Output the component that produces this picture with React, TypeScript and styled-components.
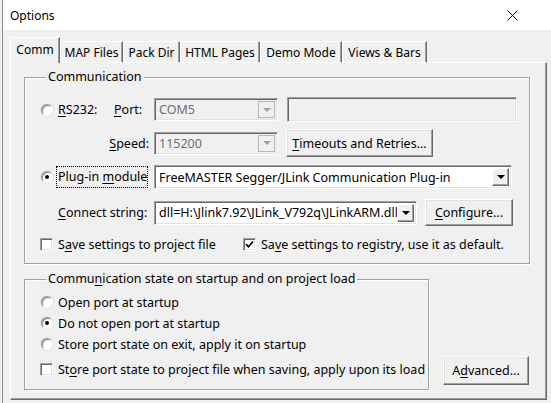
import React from 'react';
import styled, { createGlobalStyle } from 'styled-components';

const GlobalStyle = createGlobalStyle`
  html, body {
    margin: 0;
    padding: 0;
    background: #f0f0f0;
  }
  body {
    font-family: 'Noto Sans', 'Liberation Sans', sans-serif;
    font-size: 12.5px;
    color: #000;
  }
  * {
    box-sizing: border-box;
  }
`;

const Window = styled.div`
  width: 551px;
  height: 403px;
  padding-left: 2px;
  background: #f0f0f0;
  overflow: hidden;
`;

const Frame = styled.div`
  height: 100%;
  display: flex;
  flex-direction: column;
  border-left: 1px solid #8a8a8a;
`;

const TitleBar = styled.div`
  flex: none;
  height: 30px;
  display: flex;
  align-items: center;
  justify-content: space-between;
  padding: 0 33px 0 7px;
  background: #fff;
  font-size: 12px;
`;

const Body = styled.div`
  flex: 1;
  display: flex;
  flex-direction: column;
  padding: 7px 4px 4px 7px;
`;

const TabStrip = styled.div`
  display: flex;
  align-items: flex-end;
  height: 26px;
  position: relative;
  z-index: 1;
  margin-bottom: -1px;
  font-size: 12px;
`;

const Tab = styled.div<{ $w: number; $active?: boolean }>`
  width: ${p => p.$w}px;
  height: ${p => (p.$active ? 26 : 22)}px;
  display: flex;
  align-items: center;
  justify-content: center;
  padding-bottom: ${p => (p.$active ? 3 : 0)}px;
  background: #f0f0f0;
  border: 1px solid;
  border-color: #fff #696969 ${p => (p.$active ? '#f0f0f0' : '#fff')} #fff;
  border-bottom-width: ${p => (p.$active ? 0 : 1)}px;
  box-shadow: inset -1px 0 0 #a0a0a0;
  white-space: nowrap;
`;

const Panel = styled.div`
  flex: 1;
  display: flex;
  flex-direction: column;
  padding: 6px 14px 9px 13px;
  border: 1px solid;
  border-color: #fff #696969 #696969 #fff;
  box-shadow: inset -1px -1px 0 #a0a0a0;
`;

const Group = styled.fieldset<{ $w: number }>`
  width: ${p => p.$w}px;
  margin: 0;
  padding: 12px 10px 10px 15px;
  min-width: 0;
  border: 1px solid #a0a0a0;
  box-shadow: 1px 1px 0 #fff, inset 1px 1px 0 #fff;
`;

const StartupGroup = styled(Group)`
  padding: 6px 10px 11px 15px;
`;

const Legend = styled.legend`
  margin-left: 6px;
  padding: 0 2px;
  line-height: 16px;
  background: #f0f0f0;
`;

const Row = styled.div<{ $top?: number }>`
  display: flex;
  align-items: center;
  margin-top: ${p => p.$top ?? 0}px;
`;

const Cell = styled.div<{ $w: number; $right?: boolean }>`
  flex: none;
  width: ${p => p.$w}px;
  display: flex;
  align-items: center;
  justify-content: ${p => (p.$right ? 'flex-end' : 'flex-start')};
  padding-right: ${p => (p.$right ? 5 : 0)}px;
  white-space: nowrap;
`;

const Indent = styled.span`
  padding-left: 18px;
  white-space: nowrap;
`;

const RadioCircle = styled.span<{ $on?: boolean }>`
  flex: none;
  width: 12px;
  height: 12px;
  margin: 0 5px 0 1px;
  border-radius: 50%;
  border: 1px solid;
  border-color: #a0a0a0 #fff #fff #a0a0a0;
  box-shadow: inset 1px 1px 0 #8a8a8a, 0 0 0 0.5px #d0d0d0;
  background: #fff;
  display: flex;
  align-items: center;
  justify-content: center;

  &::after {
    content: '';
    width: 4px;
    height: 4px;
    border-radius: 50%;
    background: #000;
    display: ${p => (p.$on ? 'block' : 'none')};
  }
`;

const CheckBox = styled.span`
  flex: none;
  width: 13px;
  height: 13px;
  margin-right: 5px;
  border: 1px solid;
  border-color: #a0a0a0 #fff #fff #a0a0a0;
  box-shadow: inset 1px 1px 0 #696969, inset -1px -1px 0 #e3e3e3;
  background: #fff;
  display: flex;
  align-items: center;
  justify-content: center;
`;

const Focus = styled.span`
  outline: 1px dotted #000;
  outline-offset: 0;
  padding: 1px 0 2px 1px;
  margin-left: -1px;
  line-height: 17px;
`;

const Sunken = styled.div<{ $w: number; $h: number; $off?: boolean; $left?: number }>`
  flex: none;
  width: ${p => p.$w}px;
  height: ${p => p.$h}px;
  margin-left: ${p => p.$left ?? 0}px;
  display: flex;
  align-items: center;
  padding: 2px 2px 2px 4px;
  border: 1px solid;
  border-color: #a0a0a0 #fff #fff #a0a0a0;
  box-shadow: inset 1px 1px 0 #696969, inset -1px -1px 0 #e3e3e3;
  background: ${p => (p.$off ? '#f0f0f0' : '#fff')};
  color: ${p => (p.$off ? '#6d6d6d' : '#000')};
  overflow: hidden;
`;

const ComboText = styled.span`
  flex: 1;
  min-width: 0;
  white-space: nowrap;
  overflow: hidden;
`;

const DropButton = styled.span<{ $off?: boolean }>`
  flex: none;
  width: 17px;
  height: 100%;
  display: flex;
  align-items: center;
  justify-content: center;
  background: #f0f0f0;
  border: 1px solid;
  border-color: ${p => (p.$off ? '#b8b8b8' : '#fff #696969 #696969 #fff')};
  box-shadow: ${p => (p.$off ? 'none' : 'inset -1px -1px 0 #a0a0a0')};

  &::after {
    content: '';
    border-left: 4px solid transparent;
    border-right: 4px solid transparent;
    border-top: 4px solid ${p => (p.$off ? '#a0a0a0' : '#000')};
  }
`;

const Button = styled.div<{ $w: number; $h: number; $left?: number }>`
  flex: none;
  width: ${p => p.$w}px;
  height: ${p => p.$h}px;
  margin-left: ${p => p.$left ?? 0}px;
  display: flex;
  align-items: center;
  justify-content: center;
  border: 1px solid;
  border-color: #fff #696969 #696969 #fff;
  box-shadow: inset -1px -1px 0 #a0a0a0, inset 1px 1px 0 #e3e3e3;
  background: #f0f0f0;
  white-space: nowrap;
`;

const BottomArea = styled.div`
  display: flex;
  align-items: flex-end;
  margin-top: 7px;
`;

const AdvancedButton = styled(Button)`
  margin-bottom: 5px;
`;

const Option = styled.div<{ $top?: number }>`
  display: flex;
  align-items: center;
  height: 18px;
  margin-top: ${p => p.$top ?? 0}px;
  white-space: nowrap;
`;

const Key = styled.u`
  text-decoration-thickness: 1px;
  text-underline-offset: 2px;
`;

const CloseIcon = () => (
  <svg width="11" height="11" viewBox="0 0 11 11">
    <path d="M0.5 0.5 L10.5 10.5 M10.5 0.5 L0.5 10.5" stroke="#000" strokeWidth="1" />
  </svg>
);

const CheckMark = () => (
  <svg width="9" height="9" viewBox="0 0 9 9">
    <path d="M1 4.2 L3.4 6.8 L8 1.5" stroke="#000" strokeWidth="1.7" fill="none" />
  </svg>
);

const tabs = [
  { label: 'Comm', w: 50 },
  { label: 'MAP Files', w: 63 },
  { label: 'Pack Dir', w: 57 },
  { label: 'HTML Pages', w: 80 },
  { label: 'Demo Mode', w: 82 },
  { label: 'Views & Bars', w: 85 },
];

export default function App() {
  return (
    <>
      <GlobalStyle />
      <Window>
        <Frame>
          <TitleBar>
            <span>Options</span>
            <CloseIcon />
          </TitleBar>
          <Body>
            <TabStrip>
              {tabs.map((t, i) => (
                <Tab key={t.label} $w={t.w} $active={i === 0}>
                  {t.label}
                </Tab>
              ))}
            </TabStrip>
            <Panel>
              <Group $w={506}>
                <Legend>Communication</Legend>
                <Row>
                  <Cell $w={74}>
                    <RadioCircle />
                    <span>
                      <Key>R</Key>S232:
                    </span>
                  </Cell>
                  <Cell $w={40}>
                    <span>
                      <Key>P</Key>ort:
                    </span>
                  </Cell>
                  <Sunken $w={124} $h={23} $off>
                    <ComboText>COM5</ComboText>
                    <DropButton $off />
                  </Sunken>
                  <Sunken $w={230} $h={25} $off $left={9} />
                </Row>
                <Row $top={7}>
                  <Cell $w={114} $right>
                    <span>
                      <Key>S</Key>peed:
                    </span>
                  </Cell>
                  <Sunken $w={124} $h={23} $off>
                    <ComboText>115200</ComboText>
                    <DropButton $off />
                  </Sunken>
                  <Button $w={147} $h={28} $left={8}>
                    <span>
                      <Key>T</Key>imeouts and Retries...
                    </span>
                  </Button>
                </Row>
                <Row $top={8}>
                  <Cell $w={114}>
                    <RadioCircle $on />
                    <Focus>
                      Plug-in <Key>m</Key>odule
                    </Focus>
                  </Cell>
                  <Sunken $w={358} $h={24}>
                    <ComboText>FreeMASTER Segger/JLink Communication Plug-in</ComboText>
                    <DropButton />
                  </Sunken>
                </Row>
                <Row $top={10}>
                  <Cell $w={114}>
                    <Indent>
                      <Key>C</Key>onnect string:
                    </Indent>
                  </Cell>
                  <Sunken $w={263} $h={24}>
                    <ComboText>dll=H:\Jlink7.92\JLink_V792q\JLinkARM.dll</ComboText>
                    <DropButton />
                  </Sunken>
                  <Button $w={88} $h={27} $left={8}>
                    <span>
                      <Key>C</Key>onfigure...
                    </span>
                  </Button>
                </Row>
                <Row $top={10}>
                  <Cell $w={203}>
                    <CheckBox />
                    <span>
                      S<Key>a</Key>ve settings to project file
                    </span>
                  </Cell>
                  <CheckBox>
                    <CheckMark />
                  </CheckBox>
                  <span>
                    Sa<Key>v</Key>e settings to registry, use it as default.
                  </span>
                </Row>
              </Group>
              <BottomArea>
                <StartupGroup $w={405}>
                  <Legend>
                    Commu<Key>n</Key>ication state on startup and on project load
                  </Legend>
                  <Option>
                    <RadioCircle />
                    Open port at startup
                  </Option>
                  <Option $top={3}>
                    <RadioCircle $on />
                    Do not open port at startup
                  </Option>
                  <Option $top={3}>
                    <RadioCircle />
                    Store port state on exit, apply it on startup
                  </Option>
                  <Option $top={7}>
                    <CheckBox />
                    <span>
                      St<Key>o</Key>re port state to project file when saving, apply upon its load
                    </span>
                  </Option>
                </StartupGroup>
                <AdvancedButton $w={86} $h={29} $left={14}>
                  <span>
                    A<Key>d</Key>vanced...
                  </span>
                </AdvancedButton>
              </BottomArea>
            </Panel>
          </Body>
        </Frame>
      </Window>
    </>
  );
}
